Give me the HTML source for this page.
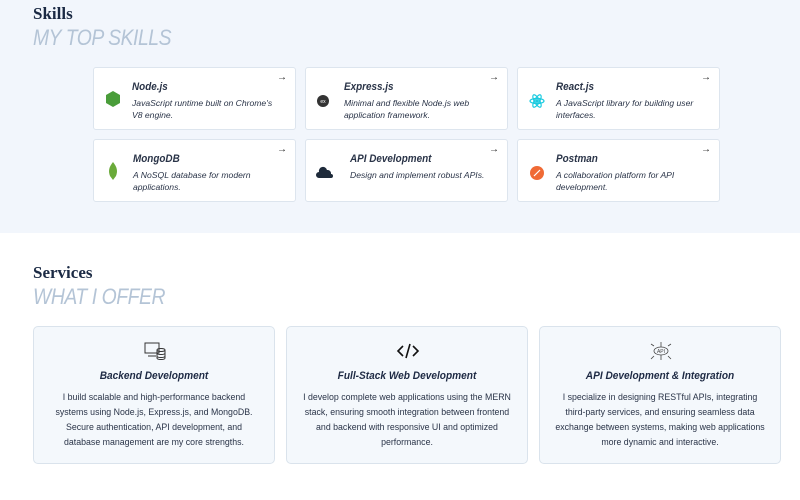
<!DOCTYPE html>
<html><head><meta charset="utf-8"><style>
*{margin:0;padding:0;box-sizing:border-box}
body{width:800px;height:500px;overflow:hidden;background:#fff;font-family:"Liberation Sans",sans-serif;color:#1e2a3a}
.top{position:absolute;left:0;top:0;width:800px;height:233px;background:#f2f6fc}
h2{position:absolute;left:33px;font-family:"Liberation Serif",serif;font-weight:bold;font-size:17px;color:#1b2a44}
.sub{position:absolute;left:33px;font-family:"Liberation Sans",sans-serif;font-style:italic;font-size:22px;color:#b4c4d6;letter-spacing:-0.5px;transform:scaleX(0.88);transform-origin:left}
.sk{position:absolute;width:203px;height:63px;background:#fff;border:1px solid #dde5ee;border-radius:3px}
.sk .ic{position:absolute;left:10px;top:22px;width:18px;height:18px}
.sk .t{position:absolute;left:38px;top:13px;font-size:11px;font-style:italic;color:#2a3448;transform:scaleX(0.9);transform-origin:left;font-weight:bold}
.sk .d{position:absolute;left:38px;top:29px;width:152px;font-size:8.6px;font-style:italic;line-height:12px;color:#2a3448}
.sk .ar{position:absolute;right:8px;top:4px;font-size:10px;color:#222}
.sv{position:absolute;top:326px;width:242px;height:138px;background:#f4f8fc;border:1px solid #dae3ec;border-radius:5px;text-align:center}
.sv .ic{position:absolute;left:0;right:0;top:14px;height:20px}
.sv .t{position:absolute;left:0;right:0;top:43px;font-size:11px;font-style:italic;font-weight:bold;color:#1e2a44;transform:scaleX(0.92)}
.sv .d{position:absolute;left:15px;right:15px;top:63px;font-size:8.8px;line-height:15px;color:#2a3448}
</style></head><body>
<div class="top"></div>
<h2 style="top:4px">Skills</h2>
<div class="sub" style="top:25px">MY TOP SKILLS</div>

<div class="sk" style="left:93px;top:67px"><svg class="ic" viewBox="0 0 18 18"><polygon points="9,1 16,5 16,13 9,17 2,13 2,5" fill="#4a9d3a"/></svg><div class="t">Node.js</div><div class="d">JavaScript runtime built on Chrome's V8 engine.</div><div class="ar">→</div></div>
<div class="sk" style="left:305px;top:67px"><svg class="ic" viewBox="0 0 18 18"><circle cx="7" cy="11" r="6" fill="#333"/><text x="7" y="13" font-size="5" fill="#fff" text-anchor="middle">ex</text></svg><div class="t">Express.js</div><div class="d">Minimal and flexible Node.js web application framework.</div><div class="ar">→</div></div>
<div class="sk" style="left:517px;top:67px"><svg class="ic" viewBox="0 0 18 18" fill="none" stroke="#1ccbe0" stroke-width="1.2"><ellipse cx="9" cy="11" rx="7" ry="2.6"/><ellipse cx="9" cy="11" rx="7" ry="2.6" transform="rotate(60 9 11)"/><ellipse cx="9" cy="11" rx="7" ry="2.6" transform="rotate(-60 9 11)"/><circle cx="9" cy="11" r="1.3" fill="#1ccbe0"/></svg><div class="t">React.js</div><div class="d">A JavaScript library for building user interfaces.</div><div class="ar">→</div></div>
<div class="sk" style="left:93px;top:139px"><svg class="ic" viewBox="0 0 18 18" style="top:20px;height:22px"><path d="M9 0C5 5 4 9 6 14L9 18 12 14C14 9 13 5 9 0Z" fill="#6aaa3a"/></svg><div class="t" style="left:39px">MongoDB</div><div class="d" style="left:39px">A NoSQL database for modern applications.</div><div class="ar">→</div></div>
<div class="sk" style="left:305px;top:139px"><svg class="ic" viewBox="0 0 18 18"><path d="M3 16a3 3 0 0 1 0-6 4 4 0 0 1 8-2 3.5 3.5 0 0 1 4 4 2 2 0 0 1 0 4Z" fill="#1e2a3a"/></svg><div class="t" style="left:44px">API Development</div><div class="d" style="left:44px">Design and implement robust APIs.</div><div class="ar">→</div></div>
<div class="sk" style="left:517px;top:139px"><svg class="ic" viewBox="0 0 18 18"><circle cx="9" cy="11" r="7" fill="#f06a35"/><path d="M6 14L12 8" stroke="#fff" stroke-width="1.2"/></svg><div class="t">Postman</div><div class="d">A collaboration platform for API development.</div><div class="ar">→</div></div>

<h2 style="top:263px">Services</h2>
<div class="sub" style="top:284px">WHAT I OFFER</div>

<div class="sv" style="left:33px"><svg class="ic" viewBox="0 0 242 20"><g fill="none" stroke="#333" stroke-width="1"><rect x="111" y="2" width="14" height="10"/><path d="M114 15h8"/><ellipse cx="127" cy="9" rx="4" ry="1.5"/><path d="M123 9v8c0 2 8 2 8 0V9M123 12c0 2 8 2 8 0M123 15c0 2 8 2 8 0"/></g></svg><div class="t">Backend Development</div><div class="d">I build scalable and high-performance backend systems using Node.js, Express.js, and MongoDB. Secure authentication, API development, and database management are my core strengths.</div></div>
<div class="sv" style="left:286px"><svg class="ic" viewBox="0 0 242 20"><g fill="none" stroke="#111" stroke-width="1.6"><path d="M116 5l-5 5 5 5M126 5l5 5-5 5M123 3l-4 14"/></g></svg><div class="t">Full-Stack Web Development</div><div class="d">I develop complete web applications using the MERN stack, ensuring smooth integration between frontend and backend with responsive UI and optimized performance.</div></div>
<div class="sv" style="left:539px"><svg class="ic" viewBox="0 0 242 20"><g fill="none" stroke="#444" stroke-width="0.8"><ellipse cx="121" cy="10" rx="7" ry="4"/><path d="M114 5l-3-2M128 5l3-2M121 6V1M114 15l-3 3M128 15l3 3M121 14v5"/><text x="121" y="12" font-size="5" fill="#444" stroke="none" text-anchor="middle">API</text></g></svg><div class="t">API Development &amp; Integration</div><div class="d">I specialize in designing RESTful APIs, integrating third-party services, and ensuring seamless data exchange between systems, making web applications more dynamic and interactive.</div></div>
</body></html>
